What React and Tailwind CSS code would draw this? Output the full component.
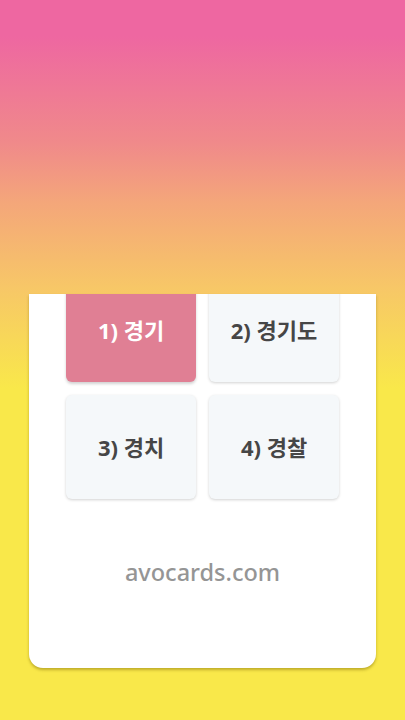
import React from 'react';

const options = [
  { id: 1, label: '1) 경기', selected: true },
  { id: 2, label: '2) 경기도' },
  { id: 3, label: '3) 경치' },
  { id: 4, label: '4) 경찰' },
];

export default function App() {
  return (
    <div className="h-[720px] w-full overflow-hidden bg-[linear-gradient(to_bottom,#ee67a1_5%,#f08a8a_20%,#f4a67a_28%,#f7c767_40%,#f9e84a_54%,#f9e84a_100%)] font-['Noto_Sans','Noto_Sans_CJK_KR',sans-serif]">
      <div className="pt-[294px] px-[29px]">
        {/* Card, clipped at the top like a scrolled panel */}
        <div className="h-[374px] overflow-hidden rounded-b-[14px] bg-white shadow-[0_2px_3px_rgba(120,100,0,0.45)]">
          <div className="-mt-4 grid grid-cols-[130px_130px] justify-center gap-x-[13px] gap-y-[13px]">
            {options.map((o) => (
              <button
                key={o.id}
                className={
                  o.selected
                    ? 'h-[104px] rounded-md bg-[#e07f94] text-[22px] font-bold text-white shadow-[0_2px_3px_rgba(0,0,0,0.18)]'
                    : 'h-[104px] rounded-md bg-[#f5f8fa] text-[22px] font-bold text-[#464646] shadow-[0_1px_3px_rgba(0,0,0,0.18)]'
                }
              >
                {o.label}
              </button>
            ))}
          </div>
          <p className="mt-[56px] text-center text-[23.5px] font-medium text-[#959595]">avocards.com</p>
        </div>
      </div>
    </div>
  );
}
